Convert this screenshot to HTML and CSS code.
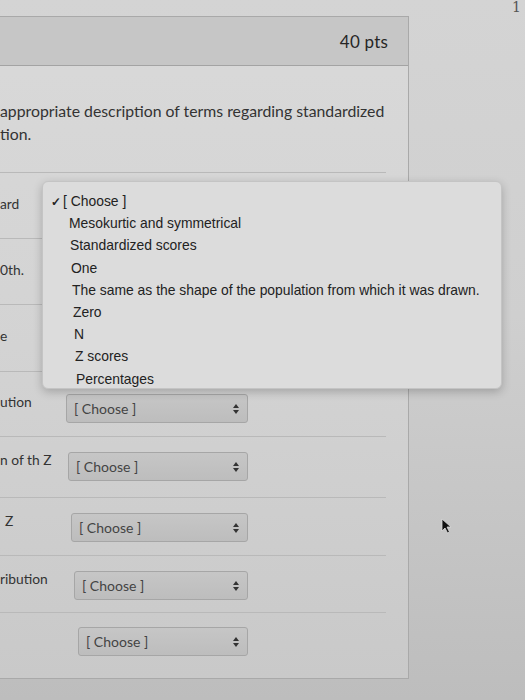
FILE: index.html
```html
<!DOCTYPE html>
<html>
<head>
<meta charset="utf-8">
<link rel="stylesheet" href="styles.css">
</head>
<body>
<span class="corner">1</span>
<div class="card">
  <div class="card-head"><span class="pts">40 pts</span></div>
  <div class="card-body">
    <p class="question">appropriate description of terms regarding standardized<br>tion.</p>
    <div class="rows">
      <div class="row"><span class="label">ard</span></div>
      <div class="row"><span class="label">0th.</span></div>
      <div class="row"><span class="label">e</span></div>
      <div class="row"><span class="label">ution</span><div class="select"><span>[ Choose ]</span><i class="arrows"></i></div></div>
      <div class="row"><span class="label">n of th Z</span><div class="select"><span>[ Choose ]</span><i class="arrows"></i></div></div>
      <div class="row"><span class="label lz">Z</span><div class="select"><span>[ Choose ]</span><i class="arrows"></i></div></div>
      <div class="row"><span class="label">ribution</span><div class="select"><span>[ Choose ]</span><i class="arrows"></i></div></div>
      <div class="row"><span class="label"></span><div class="select"><span>[ Choose ]</span><i class="arrows"></i></div></div>
    </div>
  </div>
</div>
<ul class="menu">
  <li class="checked"><span class="check">✓</span>[ Choose ]</li>
  <li>Mesokurtic and symmetrical</li>
  <li>Standardized scores</li>
  <li>One</li>
  <li>The same as the shape of the population from which it was drawn.</li>
  <li>Zero</li>
  <li>N</li>
  <li>Z scores</li>
  <li>Percentages</li>
</ul>
<svg class="cursor" width="12" height="16" viewBox="0 0 12 16"><path d="M1 1 L1 13 L4 10 L6.5 15 L8.5 14 L6 9 L10 9 Z" fill="#111" stroke="#ddd" stroke-width="0.8"/></svg>
</body>
</html>
```

FILE: styles.css
```css
html, body {
  margin: 0;
  padding: 0;
}
body {
  width: 525px;
  height: 700px;
  overflow: hidden;
  position: relative;
  background: linear-gradient(180deg, #d4d4d4 0%, #cfcfcf 45%, #bdbdbd 100%);
  font-family: Lato, "Open Sans", sans-serif;
  color: #333;
}
.corner {
  position: absolute;
  top: 0;
  right: 4px;
  font-family: "DejaVu Serif", serif;
  font-size: 14px;
  line-height: 14px;
  color: #555;
}
.card {
  margin-top: 16px;
  width: 408px;
  border: 1px solid #a9a9a9;
  border-left: none;
  background: linear-gradient(180deg, #d9d9d9 0%, #d3d3d3 50%, #c9c9c9 100%);
}
.card-head {
  height: 48px;
  background: #c6c6c6;
  border-bottom: 1px solid #a3a3a3;
  display: flex;
  align-items: center;
  justify-content: flex-end;
  padding-right: 20px;
}
.pts {
  font-size: 17px;
  color: #262626;
  letter-spacing: 0.2px;
}
.card-body {
  padding: 33px 22px 0 0;
}
.question {
  margin: 0;
  font-size: 15.8px;
  line-height: 23px;
  color: #333;
  white-space: nowrap;
  padding-bottom: 27px;
  border-bottom: 1px solid #b9b9b9;
}
.rows {
  display: flex;
  flex-direction: column;
}
.row {
  box-sizing: border-box;
  display: flex;
  align-items: flex-start;
  border-bottom: 1px solid #b9b9b9;
  padding-top: 15px;
}
.row:nth-child(1), .row:nth-child(2) { height: 66px; padding-top: 23px; }
.row:nth-child(3) { height: 67px; padding-top: 23px; }
.row:nth-child(4) { height: 65px; padding-top: 22px; }
.row:nth-child(5) { height: 61px; }
.row:nth-child(6) { height: 58px; }
.row:nth-child(7) { height: 57px; }
.row:nth-child(8) { height: 65px; border-bottom: none; padding-top: 14px; }
.label {
  width: 66px;
  flex: none;
  font-size: 13.8px;
  line-height: 16px;
  color: #333;
}
.row:nth-child(5) .label { width: 68px; }
.row:nth-child(6) .label { width: 66px; padding-left: 5px; }
.row:nth-child(7) .label { width: 74px; }
.row:nth-child(8) .label { width: 78px; }
.select {
  flex: none;
  width: 182px;
  height: 29px;
  box-sizing: border-box;
  border: 1px solid #a6a6a6;
  border-radius: 3px;
  background: linear-gradient(180deg, #c6c6c6, #bdbdbd);
  display: flex;
  align-items: center;
  justify-content: space-between;
  padding: 0 8px 0 7px;
  font-size: 14px;
  color: #444;
}
.row:nth-child(5) .select { width: 180px; }
.row:nth-child(6) .select { width: 177px; }
.row:nth-child(7) .select { width: 174px; }
.row:nth-child(8) .select { width: 170px; }
.arrows {
  width: 6px;
  height: 10px;
  position: relative;
}
.arrows::before, .arrows::after {
  content: "";
  position: absolute;
  left: 0;
  border-left: 3px solid transparent;
  border-right: 3px solid transparent;
}
.arrows::before {
  top: 0;
  border-bottom: 4px solid #333;
}
.arrows::after {
  bottom: 0;
  border-top: 4px solid #333;
}
.menu {
  position: absolute;
  left: 42px;
  top: 181px;
  width: 460px;
  height: 208px;
  box-sizing: border-box;
  margin: 0;
  padding: 8px 0 0 26px;
  list-style: none;
  background: #dcdcdc;
  border: 1px solid #c4c4c4;
  border-radius: 6px;
  box-shadow: 0 3px 10px rgba(0,0,0,0.22);
  font-family: "Liberation Sans", Arial, sans-serif;
  font-size: 13.9px;
  color: #222;
}
.menu li {
  height: 22.2px;
  line-height: 22px;
  white-space: nowrap;
}
.menu li:nth-child(3) { padding-left: 1px; }
.menu li:nth-child(4) { padding-left: 2px; }
.menu li:nth-child(5) { padding-left: 3px; }
.menu li:nth-child(6) { padding-left: 4px; }
.menu li:nth-child(7) { padding-left: 5px; }
.menu li:nth-child(8) { padding-left: 6px; }
.menu li:nth-child(9) { padding-left: 7px; }
.menu li.checked {
  margin-left: -18px;
}
.check {
  display: inline-block;
  width: 12px;
  font-size: 11.5px;
  font-weight: bold;
}
.cursor {
  position: absolute;
  left: 441px;
  top: 518px;
}
```
